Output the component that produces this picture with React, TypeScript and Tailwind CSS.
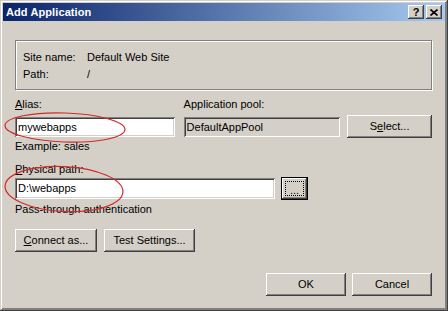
import React from "react";

const raised =
  "bg-[#d4d0c8] shadow-[inset_-1px_-1px_#404040,inset_1px_1px_#ffffff,inset_-2px_-2px_#808080]";
const sunken =
  "shadow-[inset_1px_1px_#808080,inset_-1px_-1px_#ffffff,inset_2px_2px_#404040,inset_-2px_-2px_#d4d0c8]";

function Btn({ children, className }: { children: React.ReactNode; className: string }) {
  return (
    <div className={`${raised} ${className} flex items-center justify-center text-black leading-none`}>
      {children}
    </div>
  );
}

export default function App() {
  return (
    <div className="relative w-[448px] h-[311px] overflow-hidden bg-[#d4d0c8] p-[3px] pb-[3px] shadow-[inset_-1px_-1px_#404040,inset_1px_1px_#d4d0c8,inset_-2px_-2px_#808080,inset_2px_2px_#ffffff,inset_-3px_-3px_#808080] font-['Liberation_Sans',Arial,sans-serif] text-[11px] text-black">
      {/* Title bar */}
      <div className="h-[18px] flex items-center justify-between bg-[linear-gradient(to_right,#0a246a,#a6caf0)] pl-[3px] pr-[3px]">
        <span className="text-white font-bold text-[11px] leading-none tracking-[0.1px]">Add Application</span>
        <div className="flex gap-[2px]">
          <Btn className="w-[16px] h-[14px]">
            <span className="font-bold text-[11px] leading-none mt-[1px]">?</span>
          </Btn>
          <Btn className="w-[16px] h-[14px]">
            <svg width="8" height="7" viewBox="0 0 8 7">
              <path d="M0.5 0.5 L7.5 6.5 M7.5 0.5 L0.5 6.5" stroke="#000" strokeWidth="1.6" fill="none" />
            </svg>
          </Btn>
        </div>
      </div>

      {/* Content */}
      <div className="flex flex-col pl-[12px] pr-[13px]">
        {/* Group box */}
        <div className="mt-[19px] h-[50px] border border-[#808080] shadow-[inset_1px_1px_#ffffff,1px_1px_#ffffff] pt-[8px] pl-[7px]">
          <div className="grid grid-cols-[64px_1fr] leading-[17px]">
            <span>Site name:</span>
            <span>Default Web Site</span>
            <span>Path:</span>
            <span>/</span>
          </div>
        </div>

        {/* Alias row */}
        <div className="mt-[8px] flex items-start">
          <div className="w-[160px] flex flex-col">
            <span className="leading-[13px] h-[13px]">
              <span className="underline">A</span>lias:
            </span>
            <div className={`mt-[6px] h-[20px] bg-white ${sunken} flex items-center pl-[3px]`}>mywebapps</div>
          </div>
          <div className="ml-[9px] w-[157px] flex flex-col">
            <span className="leading-[13px] h-[13px]">Application pool:</span>
            <div className={`mt-[6px] h-[20px] bg-[#d4d0c8] ${sunken} flex items-center pl-[3px]`}>DefaultAppPool</div>
          </div>
          <Btn className="ml-[7px] mt-[17px] w-[85px] h-[23px]">
            <span>
              S<span className="underline">e</span>lect...
            </span>
          </Btn>
        </div>

        <span className="mt-[2px] leading-[13px]">Example: sales</span>

        <span className="mt-[10px] leading-[13px]">
          <span className="underline">P</span>hysical path:
        </span>

        <div className="mt-[1px] flex items-center">
          <div className={`w-[260px] h-[21px] bg-white ${sunken} flex items-center pl-[3px]`}>D:\webapps</div>
          <div className="ml-[6px] w-[27px] h-[23px] border border-black">
            <div className={`${raised} w-full h-full p-[3px]`}>
              <div className="w-full h-full border border-dotted border-black flex items-end justify-center leading-[10px]">
                ...
              </div>
            </div>
          </div>
        </div>

        <span className="mt-[3px] leading-[13px]">Pass-through authentication</span>

        <div className="mt-[13px] flex gap-[7px]">
          <Btn className="w-[82px] h-[23px]">
            <span>
              <span className="underline">C</span>onnect as...
            </span>
          </Btn>
          <Btn className="w-[91px] h-[23px]">
            <span>
              Test Settin<span className="underline">g</span>s...
            </span>
          </Btn>
        </div>

        <div className="mt-[21px] flex justify-end gap-[6px]">
          <Btn className="w-[80px] h-[23px]">OK</Btn>
          <Btn className="w-[80px] h-[23px]">Cancel</Btn>
        </div>
      </div>

      {/* Red annotation ellipses */}
      <svg className="absolute left-0 top-0 pointer-events-none" width="448" height="311" viewBox="0 0 448 311">
        <ellipse cx="65" cy="127.5" rx="60" ry="14.5" transform="rotate(2 65 127.5)" fill="none" stroke="#d42a2a" strokeWidth="1.2" />
        <ellipse cx="64" cy="189" rx="59" ry="22.5" transform="rotate(3 64 189)" fill="none" stroke="#d42a2a" strokeWidth="1.2" />
      </svg>
    </div>
  );
}
